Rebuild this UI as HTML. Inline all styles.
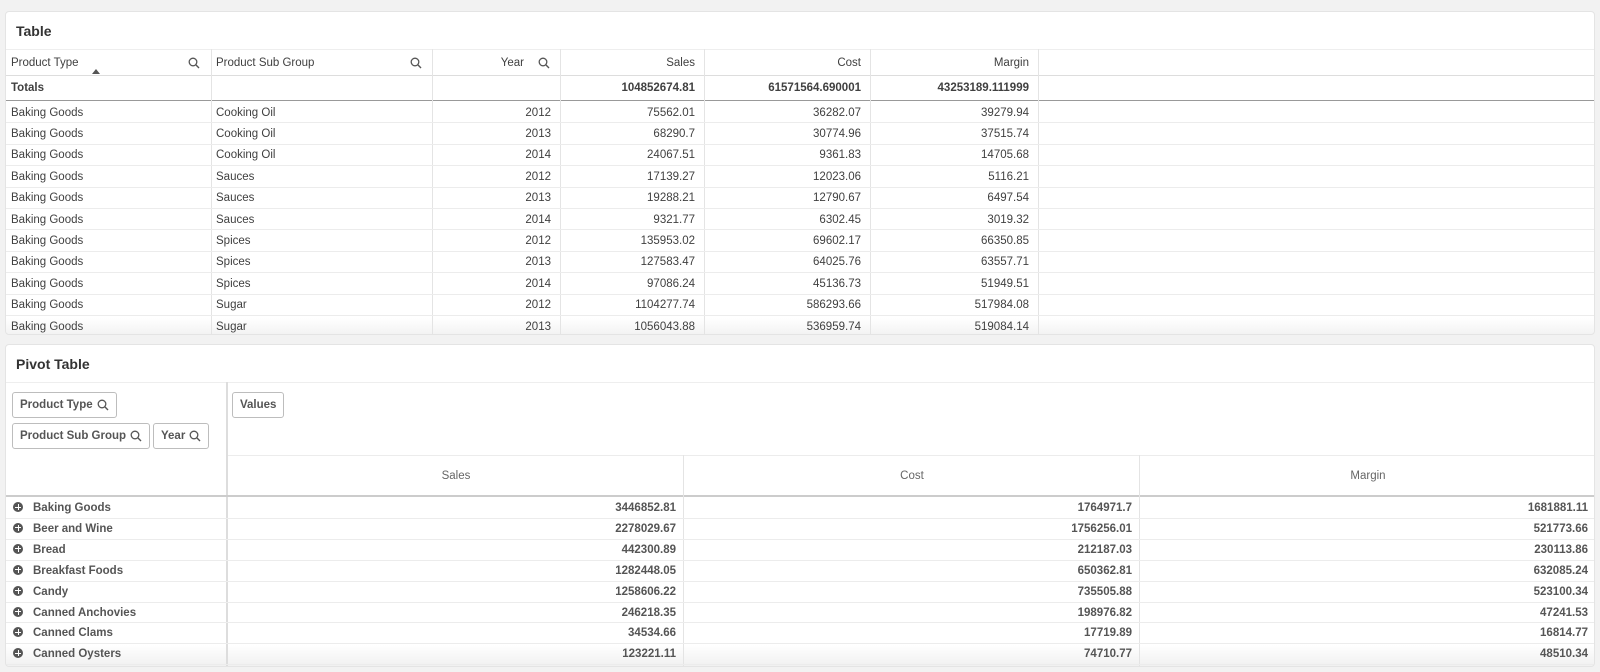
<!DOCTYPE html>
<html><head><meta charset="utf-8"><style>
*{box-sizing:border-box;margin:0;padding:0}
body{width:1600px;height:672px;background:#f2f2f2;font-family:"Liberation Sans",sans-serif;font-size:11.5px;color:#404040;position:relative;overflow:hidden}
.card{position:absolute;left:5px;width:1590px;background:#fff;border:1px solid #e4e4e4;border-radius:4px;overflow:hidden}
.title{position:absolute;left:10px;font-size:14px;font-weight:bold;color:#333}
.a{position:absolute;white-space:nowrap}
.r{text-align:right}
.hl{position:absolute;height:1px;background:#ececec}
.vl{position:absolute;width:1px;background:#e4e4e4}
.chip{position:absolute;border:1px solid #bdbdbd;border-radius:3px;font-weight:bold;font-size:11.5px;color:#555;padding:0 7px;line-height:24px;white-space:nowrap}
.q{display:inline-block;vertical-align:middle;margin-left:4px}
.plus{position:absolute;width:10px;height:10px;border-radius:50%;background:#555}
.plus:before{content:"";position:absolute;left:2px;top:4.5px;width:6px;height:1px;background:#fff}
.plus:after{content:"";position:absolute;left:4.5px;top:2px;width:1px;height:6px;background:#fff}
</style></head><body>
<div class="card" style="top:11px;height:324px" id="t1">
<div class="title" style="top:11px">Table</div>
</div>
<div class="card" style="top:344px;height:323px" id="t2">
<div class="title" style="top:11px">Pivot Table</div>
</div>
<script>
function q(){return '<svg class="q" width="12" height="12" viewBox="0 0 12 12"><circle cx="5" cy="5" r="3.8" fill="none" stroke="#555" stroke-width="1.3"/><path d="M7.8 7.8L11 11" stroke="#555" stroke-width="1.4"/></svg>';}
var t1=document.getElementById('t1'),h='';
var cols=[0,205,426,554,698,864,1032,1590];
h+='<div class="a" style="left:0;top:306px;width:1590px;height:20px;background:linear-gradient(rgba(255,255,255,0),rgba(225,225,225,.5))"></div>';
h+='<div class="hl" style="left:0;width:1590px;top:37px;background:#eee"></div>';
h+='<div class="hl" style="left:0;width:1590px;top:63px;background:#ddd"></div>';
h+='<div class="hl" style="left:0;width:1590px;top:88px;background:#999"></div>';
for(var i=1;i<7;i++)h+='<div class="vl" style="left:'+cols[i]+'px;top:37px;height:290px"></div>';
var hy=45;
h+='<div class="a" style="left:5px;top:'+hy+'px">Product Type</div><div class="a" style="left:178px;top:'+(hy)+'px">'+q()+'</div>';
h+='<div class="a" style="left:86px;top:57px;width:0;height:0;border-left:4px solid transparent;border-right:4px solid transparent;border-bottom:5px solid #555"></div>';
h+='<div class="a" style="left:210px;top:'+hy+'px">Product Sub Group</div><div class="a" style="left:400px;top:'+hy+'px">'+q()+'</div>';
h+='<div class="a r" style="left:426px;width:92px;top:'+hy+'px">Year</div><div class="a" style="left:528px;top:'+hy+'px">'+q()+'</div>';
var hn=['Sales','Cost','Margin'];
for(var i=0;i<3;i++)h+='<div class="a r" style="left:'+cols[3+i]+'px;width:'+(cols[4+i]-cols[3+i]-9)+'px;top:'+hy+'px">'+hn[i]+'</div>';
var ty=70;
h+='<div class="a" style="left:5px;top:'+ty+'px;font-weight:bold">Totals</div>';
var tv=['104852674.81','61571564.690001','43253189.111999'];
for(var i=0;i<3;i++)h+='<div class="a r" style="left:'+cols[3+i]+'px;width:'+(cols[4+i]-cols[3+i]-9)+'px;top:'+ty+'px;font-weight:bold">'+tv[i]+'</div>';
var rows=[['Cooking Oil',2012,'75562.01','36282.07','39279.94'],['Cooking Oil',2013,'68290.7','30774.96','37515.74'],['Cooking Oil',2014,'24067.51','9361.83','14705.68'],['Sauces',2012,'17139.27','12023.06','5116.21'],['Sauces',2013,'19288.21','12790.67','6497.54'],['Sauces',2014,'9321.77','6302.45','3019.32'],['Spices',2012,'135953.02','69602.17','66350.85'],['Spices',2013,'127583.47','64025.76','63557.71'],['Spices',2014,'97086.24','45136.73','51949.51'],['Sugar',2012,'1104277.74','586293.66','517984.08'],['Sugar',2013,'1056043.88','536959.74','519084.14']];
for(var k=0;k<rows.length;k++){var y=89+k*21.4,r=rows[k];
 h+='<div class="hl" style="left:0;width:1590px;top:'+(y+21.4)+'px"></div>';
 var yy=y+5.5;
 h+='<div class="a" style="left:5px;top:'+yy+'px">Baking Goods</div><div class="a" style="left:210px;top:'+yy+'px">'+r[0]+'</div>';
 for(var i=0;i<4;i++)h+='<div class="a r" style="left:'+cols[2+i]+'px;width:'+(cols[3+i]-cols[2+i]-9)+'px;top:'+yy+'px">'+r[1+i]+'</div>';
}
t1.innerHTML+=h;
var t2=document.getElementById('t2');h='';
h+='<div class="a" style="left:0;top:300px;width:1590px;height:22px;background:linear-gradient(rgba(255,255,255,0),rgba(225,225,225,.5))"></div>';
h+='<div class="hl" style="left:0;width:1590px;top:37px;background:#eee"></div>';
h+='<div class="vl" style="left:220px;top:37px;height:290px;width:2px;background:#ddd"></div>';
h+='<div class="hl" style="left:222px;width:1368px;top:110px"></div>';
h+='<div class="hl" style="left:0;width:1590px;top:150px;height:2px;background:#ccc"></div>';
h+='<div class="vl" style="left:677px;top:110px;height:220px"></div><div class="vl" style="left:1133px;top:110px;height:220px"></div>';
h+='<div class="chip" style="left:6px;top:47px">Product Type'+q()+'</div>';
h+='<div class="chip" style="left:6px;top:78px">Product Sub Group'+q()+'</div>';
h+='<div class="chip" style="left:147px;top:78px">Year'+q()+'</div>';
h+='<div class="chip" style="left:226px;top:47px">Values</div>';
var pc=[222,678,1134,1590];
for(var i=0;i<3;i++)h+='<div class="a" style="left:'+pc[i]+'px;width:'+(pc[i+1]-pc[i])+'px;top:125px;text-align:center;color:#666">'+hn[i]+'</div>';
var pr=[['Baking Goods','3446852.81','1764971.7','1681881.11'],['Beer and Wine','2278029.67','1756256.01','521773.66'],['Bread','442300.89','212187.03','230113.86'],['Breakfast Foods','1282448.05','650362.81','632085.24'],['Candy','1258606.22','735505.88','523100.34'],['Canned Anchovies','246218.35','198976.82','47241.53'],['Canned Clams','34534.66','17719.89','16814.77'],['Canned Oysters','123221.11','74710.77','48510.34']];
for(var k=0;k<pr.length;k++){var y=152+k*20.9,r=pr[k],yy=y+5;
 h+='<div class="hl" style="left:0;width:1590px;top:'+(y+20.9)+'px"></div>';
 h+='<div class="plus" style="left:7px;top:'+(y+5)+'px"></div><div class="a" style="left:27px;top:'+yy+'px;font-weight:bold;color:#555">'+r[0]+'</div>';
 for(var i=0;i<3;i++)h+='<div class="a r" style="left:'+pc[i]+'px;width:'+(pc[i+1]-pc[i]-8)+'px;top:'+yy+'px;font-weight:bold;color:#555">'+r[1+i]+'</div>';
}
t2.innerHTML+=h;
</script>
</body></html>
